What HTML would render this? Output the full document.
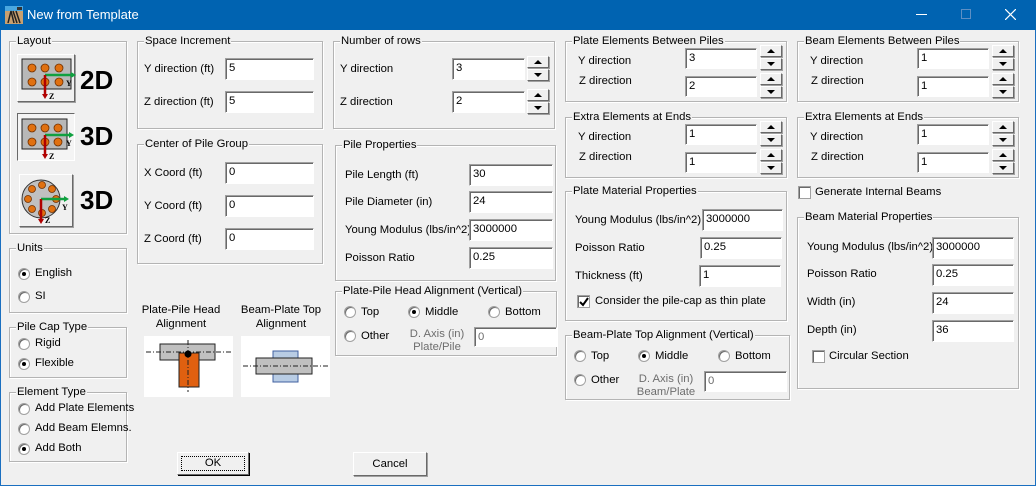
<!DOCTYPE html>
<html><head><meta charset="utf-8"><style>
*{box-sizing:border-box;margin:0;padding:0}
body{width:1036px;height:486px;overflow:hidden;background:#f0f0f0;font-family:"Liberation Sans",sans-serif;font-size:11.3px;color:#000;position:relative}
.a{position:absolute;white-space:nowrap}
.tb{position:absolute;left:0;top:0;width:1036px;height:30px;background:#0063b1;color:#fff;font-size:13px}
.win{position:absolute;left:0;top:30px;width:1036px;height:456px;border:1px solid #1a6fc0;border-top:none}
.g{position:absolute;border:1px solid #b4b4b4;box-shadow:inset 1px 1px 0 #fff,1px 1px 0 #fff}
.lg{position:absolute;top:-8px;left:6px;background:#f0f0f0;padding:0 1px;line-height:14px}
.in{position:absolute;background:#fff;border:1px solid #a0a0a0;border-right-color:#fff;border-bottom-color:#fff;box-shadow:inset 1px 1px 0 #696969;padding:2px 0 0 3px;line-height:15px}
.in.d{background:#fff;color:#6d6d6d}
.sp{position:absolute;width:22px;height:25px}
.sp div{position:absolute;left:0;width:22px;height:12px;background:#f0f0f0;border:1px solid #fff;border-right-color:#696969;border-bottom-color:#696969;box-shadow:1px 1px 0 #a0a0a0}
.sp div:after{content:"";position:absolute;left:6px;border-left:4px solid transparent;border-right:4px solid transparent}
.sp .u{top:0}.sp .u:after{top:3px;border-bottom:4px solid #000}
.sp .w{top:13px}.sp .w:after{top:3px;border-top:4px solid #000}
.r{position:absolute;width:12px;height:12px;border-radius:50%;background:#fff;border:1px solid #a0a0a0;box-shadow:inset 1px 1px 0 #696969}
.r.on:after{content:"";position:absolute;left:3px;top:3px;width:4px;height:4px;border-radius:50%;background:#000}
.c{position:absolute;width:13px;height:13px;background:#fff;border:1px solid #a0a0a0;box-shadow:inset 1px 1px 0 #696969}
.gr{color:#6d6d6d}
.btn{position:absolute;background:#f0f0f0;border:1px solid #fff;border-right-color:#696969;border-bottom-color:#696969;box-shadow:1px 1px 0 #000;text-align:center}
.lb{position:absolute;border:1px solid #fff;border-right-color:#696969;border-bottom-color:#696969;box-shadow:1px 1px 0 #a0a0a0;background:#f0f0f0}
.big{position:absolute;font-size:26px;font-weight:bold;font-family:"Liberation Sans",sans-serif}
</style></head><body>
<div class="tb">
<svg class="a" style="left:5px;top:6px" width="18" height="18"><rect x="0" y="0" width="18" height="18" fill="#c8a070"/><rect x="0" y="0" width="18" height="5" fill="#4aa8e0"/><path d="M3 17 L6 5 L9 17 M8 5 L12 17 M11 5 L15 17" stroke="#222" stroke-width="1.5" fill="none"/><rect x="12" y="1" width="5" height="3" fill="#333"/></svg>
<div class="a" style="left:27px;top:7px">New from Template</div>
<div class="a" style="left:916px;top:14px;width:11px;height:1px;background:#fff"></div>
<div class="a" style="left:961px;top:9px;width:10px;height:10px;border:1px solid #5d8fc4"></div>
<svg class="a" style="left:1005px;top:9px" width="11" height="11"><path d="M0 0L11 11M11 0L0 11" stroke="#fff" stroke-width="1.2"/></svg>
</div>
<div class="win"></div>

<div class="g" style="left:9px;top:41px;width:118px;height:193px"><span class="lg">Layout</span></div>
<div class="lb" style="left:17px;top:54px;width:58px;height:48px"></div>
<svg class="a" style="left:21px;top:58px" width="55" height="44"><rect x="1" y="1" width="49" height="30" fill="#b8b8b8" stroke="#222"/><g fill="#e07010" stroke="#703000" stroke-width=".8"><circle cx="11" cy="10" r="4"/><circle cx="24" cy="10" r="4"/><circle cx="38" cy="10" r="4"/><circle cx="11" cy="24" r="4"/><circle cx="24" cy="24" r="4"/><circle cx="38" cy="24" r="4"/></g><path d="M24 17H52" stroke="#10a040" stroke-width="2.5"/><path d="M50 14L55 17L50 20Z" fill="#10a040"/><path d="M24 17V38" stroke="#b00000" stroke-width="2.5"/><path d="M21 36L24 41L27 36Z" fill="#b00000"/><text x="45" y="28" font-size="8" font-weight="bold" font-family="Liberation Serif">Y</text><text x="28" y="41" font-size="8" font-weight="bold" font-family="Liberation Serif">Z</text></svg>
<div class="big" style="left:80px;top:65px">2D</div>
<div class="a" style="left:17px;top:113px;width:58px;height:48px;border:1px solid #696969;border-right-color:#fff;border-bottom-color:#fff;background:#f4f4f4"></div>
<svg class="a" style="left:21px;top:118px" width="55" height="44"><rect x="1" y="1" width="45" height="30" fill="#b8b8b8" stroke="#222"/><g fill="#e07010" stroke="#703000" stroke-width=".8"><circle cx="11" cy="10" r="4"/><circle cx="24" cy="10" r="4"/><circle cx="37" cy="10" r="4"/><circle cx="11" cy="24" r="4"/><circle cx="24" cy="24" r="4"/><circle cx="37" cy="24" r="4"/></g><path d="M24 17H50" stroke="#10a040" stroke-width="2.5"/><path d="M48 14L53 17L48 20Z" fill="#10a040"/><path d="M24 17V38" stroke="#b00000" stroke-width="2.5"/><path d="M21 36L24 41L27 36Z" fill="#b00000"/><text x="45" y="28" font-size="8" font-weight="bold" font-family="Liberation Serif">Y</text><text x="28" y="41" font-size="8" font-weight="bold" font-family="Liberation Serif">Z</text></svg>
<div class="big" style="left:80px;top:121px">3D</div>
<div class="lb" style="left:19px;top:174px;width:54px;height:53px"></div>
<svg class="a" style="left:21px;top:177px" width="50" height="48"><circle cx="20" cy="22" r="19" fill="#c0c0c0" stroke="#333"/><g fill="#e07010" stroke="#703000" stroke-width=".8"><circle cx="21" cy="8" r="3.5"/><circle cx="31" cy="12" r="3.5"/><circle cx="35" cy="22" r="3.5"/><circle cx="31" cy="32" r="3.5"/><circle cx="21" cy="36" r="3.5"/><circle cx="11" cy="32" r="3.5"/><circle cx="7" cy="22" r="3.5"/><circle cx="11" cy="12" r="3.5"/></g><path d="M20 22H45" stroke="#10a040" stroke-width="2.5"/><path d="M43 19L48 22L43 25Z" fill="#10a040"/><path d="M20 22V44" stroke="#b00000" stroke-width="2.5"/><path d="M17 42L20 47L23 42Z" fill="#b00000"/><text x="41" y="33" font-size="8" font-weight="bold" font-family="Liberation Serif">Y</text><text x="24" y="46" font-size="8" font-weight="bold" font-family="Liberation Serif">Z</text></svg>
<div class="big" style="left:80px;top:185px">3D</div>

<div class="g" style="left:9px;top:248px;width:118px;height:65px"><span class="lg">Units</span></div>
<div class="r on" style="left:18px;top:268px"></div><div class="a" style="left:35px;top:267px">English</div>
<div class="r" style="left:18px;top:291px"></div><div class="a" style="left:35px;top:290px">SI</div>
<div class="g" style="left:9px;top:327px;width:118px;height:51px"><span class="lg">Pile Cap Type</span></div>
<div class="r" style="left:18px;top:338px"></div><div class="a" style="left:35px;top:337px">Rigid</div>
<div class="r on" style="left:18px;top:358px"></div><div class="a" style="left:35px;top:357px">Flexible</div>
<div class="g" style="left:9px;top:392px;width:118px;height:70px"><span class="lg">Element Type</span></div>
<div class="r" style="left:18px;top:403px"></div><div class="a" style="left:35px;top:402px">Add Plate Elements</div>
<div class="r" style="left:18px;top:423px"></div><div class="a" style="left:35px;top:422px">Add Beam Elemns.</div>
<div class="r on" style="left:18px;top:443px"></div><div class="a" style="left:35px;top:442px">Add Both</div>

<div class="g" style="left:137px;top:41px;width:186px;height:88px"><span class="lg">Space Increment</span></div>
<div class="a" style="left:144px;top:63px">Y direction (ft)</div><div class="in" style="left:225px;top:58px;width:89px;height:22px">5</div>
<div class="a" style="left:144px;top:96px">Z direction (ft)</div><div class="in" style="left:225px;top:91px;width:89px;height:22px">5</div>
<div class="g" style="left:137px;top:144px;width:186px;height:120px"><span class="lg">Center of Pile Group</span></div>
<div class="a" style="left:144px;top:167px">X Coord (ft)</div><div class="in" style="left:225px;top:162px;width:89px;height:22px">0</div>
<div class="a" style="left:144px;top:200px">Y Coord (ft)</div><div class="in" style="left:225px;top:195px;width:89px;height:22px">0</div>
<div class="a" style="left:144px;top:233px">Z Coord (ft)</div><div class="in" style="left:225px;top:228px;width:89px;height:22px">0</div>

<div class="a" style="left:140px;top:303px;width:82px;text-align:center;line-height:14px">Plate-Pile Head<br>Alignment</div>
<div class="a" style="left:240px;top:303px;width:82px;text-align:center;line-height:14px">Beam-Plate Top<br>Alignment</div>
<svg class="a" style="left:144px;top:336px" width="89" height="61"><rect width="89" height="61" fill="#fff"/><rect x="16" y="8" width="55" height="16" fill="#c0c0c0" stroke="#222"/><rect x="35" y="17" width="20" height="34" fill="#e06010" stroke="#222"/><path d="M2 16H88M44 4V56" stroke="#222" stroke-dasharray="5 2 1 2"/><circle cx="44" cy="18" r="3.5" fill="#000"/></svg>
<svg class="a" style="left:241px;top:336px" width="89" height="61"><rect width="89" height="61" fill="#fff"/><rect x="32" y="15" width="25" height="31" fill="#b8cce4" stroke="#4060a0"/><rect x="15" y="22" width="56" height="16" fill="#c0c0c0" stroke="#222"/><path d="M2 30H88" stroke="#222" stroke-dasharray="5 2 1 2"/></svg>

<div class="btn" style="left:177px;top:452px;width:72px;height:23px;line-height:21px"><div style="position:absolute;left:3px;top:3px;right:3px;bottom:3px;border:1px dotted #000"></div>OK</div>
<div class="btn" style="left:353px;top:452px;width:74px;height:24px;line-height:22px;box-shadow:1px 1px 0 #a0a0a0">Cancel</div>

<div class="g" style="left:333px;top:41px;width:222px;height:88px"><span class="lg">Number of rows</span></div>
<div class="a" style="left:340px;top:63px">Y direction</div><div class="in" style="left:452px;top:58px;width:73px;height:22px">3</div>
<div class="sp" style="left:527px;top:56px"><div class="u"></div><div class="w"></div></div>
<div class="a" style="left:340px;top:96px">Z direction</div><div class="in" style="left:452px;top:91px;width:73px;height:22px">2</div>
<div class="sp" style="left:527px;top:89px"><div class="u"></div><div class="w"></div></div>

<div class="g" style="left:335px;top:145px;width:221px;height:136px"><span class="lg">Pile Properties</span></div>
<div class="a" style="left:345px;top:169px">Pile Length (ft)</div><div class="in" style="left:469px;top:164px;width:84px;height:22px">30</div>
<div class="a" style="left:345px;top:196px">Pile Diameter (in)</div><div class="in" style="left:469px;top:191px;width:84px;height:22px">24</div>
<div class="a" style="left:345px;top:224px">Young Modulus (lbs/in^2)</div><div class="in" style="left:469px;top:219px;width:84px;height:22px">3000000</div>
<div class="a" style="left:345px;top:252px">Poisson Ratio</div><div class="in" style="left:469px;top:247px;width:84px;height:22px">0.25</div>

<div class="g" style="left:335px;top:291px;width:222px;height:65px"><span class="lg">Plate-Pile Head Alignment (Vertical)</span></div>
<div class="r" style="left:344px;top:306px"></div><div class="a" style="left:361px;top:306px">Top</div>
<div class="r on" style="left:408px;top:306px"></div><div class="a" style="left:425px;top:306px">Middle</div>
<div class="r" style="left:488px;top:306px"></div><div class="a" style="left:505px;top:306px">Bottom</div>
<div class="r" style="left:344px;top:330px"></div><div class="a" style="left:361px;top:330px">Other</div>
<div class="a gr" style="left:405px;top:328px;width:64px;text-align:center;line-height:13px">D. Axis (in)<br>Plate/Pile</div>
<div class="in d" style="left:474px;top:327px;width:83px;height:20px">0</div>

<div class="g" style="left:565px;top:41px;width:222px;height:61px"><span class="lg">Plate Elements Between Piles</span></div>
<div class="a" style="left:578px;top:55px">Y direction</div><div class="in" style="left:685px;top:48px;width:72px;height:21px">3</div>
<div class="sp" style="left:760px;top:45px"><div class="u"></div><div class="w"></div></div>
<div class="a" style="left:579px;top:75px">Z direction</div><div class="in" style="left:685px;top:76px;width:72px;height:21px">2</div>
<div class="sp" style="left:760px;top:73px"><div class="u"></div><div class="w"></div></div>
<div class="g" style="left:565px;top:117px;width:222px;height:61px"><span class="lg">Extra Elements at Ends</span></div>
<div class="a" style="left:578px;top:131px">Y direction</div><div class="in" style="left:685px;top:124px;width:72px;height:21px">1</div>
<div class="sp" style="left:760px;top:121px"><div class="u"></div><div class="w"></div></div>
<div class="a" style="left:579px;top:151px">Z direction</div><div class="in" style="left:685px;top:152px;width:72px;height:21px">1</div>
<div class="sp" style="left:760px;top:149px"><div class="u"></div><div class="w"></div></div>

<div class="g" style="left:565px;top:191px;width:222px;height:130px"><span class="lg">Plate Material Properties</span></div>
<div class="a" style="left:575px;top:214px">Young Modulus (lbs/in^2)</div><div class="in" style="left:702px;top:209px;width:81px;height:22px">3000000</div>
<div class="a" style="left:575px;top:242px">Poisson Ratio</div><div class="in" style="left:700px;top:237px;width:82px;height:22px">0.25</div>
<div class="a" style="left:575px;top:270px">Thickness (ft)</div><div class="in" style="left:699px;top:265px;width:82px;height:22px">1</div>
<div class="c" style="left:577px;top:295px"></div>
<svg class="a" style="left:579px;top:297px" width="10" height="10"><path d="M1 5L4 8L9 1" stroke="#000" stroke-width="2" fill="none"/></svg>
<div class="a" style="left:595px;top:295px">Consider the pile-cap as thin plate</div>

<div class="g" style="left:565px;top:335px;width:225px;height:65px"><span class="lg">Beam-Plate Top Alignment (Vertical)</span></div>
<div class="r" style="left:574px;top:350px"></div><div class="a" style="left:591px;top:350px">Top</div>
<div class="r on" style="left:638px;top:350px"></div><div class="a" style="left:655px;top:350px">Middle</div>
<div class="r" style="left:718px;top:350px"></div><div class="a" style="left:735px;top:350px">Bottom</div>
<div class="r" style="left:574px;top:374px"></div><div class="a" style="left:591px;top:374px">Other</div>
<div class="a gr" style="left:634px;top:373px;width:64px;text-align:center;line-height:13px">D. Axis (in)<br>Beam/Plate</div>
<div class="in d" style="left:704px;top:371px;width:83px;height:21px">0</div>

<div class="g" style="left:797px;top:41px;width:222px;height:61px"><span class="lg">Beam Elements Between Piles</span></div>
<div class="a" style="left:810px;top:55px">Y direction</div><div class="in" style="left:917px;top:48px;width:72px;height:21px">1</div>
<div class="sp" style="left:992px;top:45px"><div class="u"></div><div class="w"></div></div>
<div class="a" style="left:811px;top:75px">Z direction</div><div class="in" style="left:917px;top:76px;width:72px;height:21px">1</div>
<div class="sp" style="left:992px;top:73px"><div class="u"></div><div class="w"></div></div>
<div class="g" style="left:797px;top:117px;width:222px;height:61px"><span class="lg">Extra Elements at Ends</span></div>
<div class="a" style="left:810px;top:131px">Y direction</div><div class="in" style="left:917px;top:124px;width:72px;height:21px">1</div>
<div class="sp" style="left:992px;top:121px"><div class="u"></div><div class="w"></div></div>
<div class="a" style="left:811px;top:151px">Z direction</div><div class="in" style="left:917px;top:152px;width:72px;height:21px">1</div>
<div class="sp" style="left:992px;top:149px"><div class="u"></div><div class="w"></div></div>

<div class="c" style="left:798px;top:186px"></div><div class="a" style="left:815px;top:186px">Generate Internal Beams</div>
<div class="g" style="left:797px;top:217px;width:222px;height:172px"><span class="lg">Beam Material Properties</span></div>
<div class="a" style="left:807px;top:241px">Young Modulus (lbs/in^2)</div><div class="in" style="left:932px;top:237px;width:82px;height:22px">3000000</div>
<div class="a" style="left:807px;top:268px">Poisson Ratio</div><div class="in" style="left:932px;top:264px;width:82px;height:22px">0.25</div>
<div class="a" style="left:807px;top:296px">Width (in)</div><div class="in" style="left:932px;top:292px;width:82px;height:22px">24</div>
<div class="a" style="left:807px;top:324px">Depth (in)</div><div class="in" style="left:932px;top:320px;width:82px;height:22px">36</div>
<div class="c" style="left:812px;top:350px"></div><div class="a" style="left:829px;top:350px">Circular Section</div>
</body></html>
